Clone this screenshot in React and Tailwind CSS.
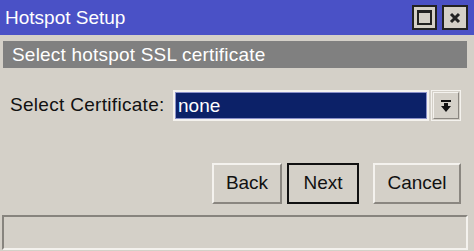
import React from 'react';

const font = { fontFamily: '"Liberation Sans", Arial, sans-serif' };

const WinButton = ({ children, className = '' }) => (
  <button
    className={`h-[41px] bg-[#d4d0c8] text-[19px] text-[#111] border-2 border-t-[#f4f2ee] border-l-[#f4f2ee] border-r-[#8a8680] border-b-[#8a8680] ${className}`}
  >
    {children}
  </button>
);

const App = () => {
  return (
    <div className="w-[474px] h-[251px] bg-[#d4d0c8] overflow-hidden flex flex-col" style={font}>
      {/* Title bar */}
      <div className="h-[35px] bg-[#4a51c6] flex items-center justify-between pl-[5px] pr-[6px]">
        <span className="text-white text-[19px] leading-none">Hotspot Setup</span>
        <div className="flex gap-[5px]">
          <div className="w-[25px] h-[25px] bg-[#d4d0c8] border-2 border-[#222] flex items-center justify-center">
            <div className="w-[15px] h-[15px] border-2 border-[#222] border-t-[3px]" />
          </div>
          <div className="w-[26px] h-[25px] bg-[#d4d0c8] border-2 border-[#222] flex items-center justify-center">
            <svg width="12" height="12" viewBox="0 0 12 12">
              <path d="M2 2 L10 10 M10 2 L2 10" stroke="#222" strokeWidth="3" />
            </svg>
          </div>
        </div>
      </div>

      {/* Section header */}
      <div className="mt-[6px] mx-[3px] w-[464px] h-[27px] bg-[#808080] flex items-center pl-[9px]">
        <span className="text-white text-[19px] leading-none tracking-[0.2px]">Select hotspot SSL certificate</span>
      </div>

      {/* Certificate row */}
      <div className="mt-[22px] flex items-center pl-[10px]">
        <span className="text-[19px] text-[#111] w-[163px] tracking-[0.3px]">Select Certificate:</span>
        <div className="w-[256px] h-[31px] bg-[#f4f2ee] p-[2px]">
          <div className="w-full h-full bg-[#0c2168] border border-[#8a90c8] flex items-center pl-[2px]">
            <span className="text-white text-[19px] leading-none">none</span>
          </div>
        </div>
        <div className="ml-[2px] w-[30px] h-[31px] bg-[#d4d0c8] border border-[#f4f2ee] flex items-center justify-center">
          <div className="w-[26px] h-[27px] border border-[#8a8680] border-t-[#f4f2ee] border-l-[#f4f2ee] flex items-center justify-center">
            <svg width="14" height="14" viewBox="0 0 14 14">
              <rect x="2" y="1" width="10" height="2" fill="#111" />
              <path d="M5 4 H9 V7 H12 L7 13 L2 7 H5 Z" fill="#111" />
            </svg>
          </div>
        </div>
      </div>

      {/* Buttons */}
      <div className="mt-[42px] flex items-center pl-[212px]">
        <WinButton className="w-[70px]">Back</WinButton>
        <WinButton className="ml-[5px] w-[72px] !border-[#111]">Next</WinButton>
        <WinButton className="ml-[14px] w-[88px]">Cancel</WinButton>
      </div>

      {/* Status bar */}
      <div className="mt-[11px] ml-[2px] w-[466px] h-[35px] bg-[#d4d0c8] border-2 border-t-[#87847e] border-l-[#87847e] border-r-[#f4f2ee] border-b-[#f4f2ee]" />
    </div>
  );
};

export default App;
